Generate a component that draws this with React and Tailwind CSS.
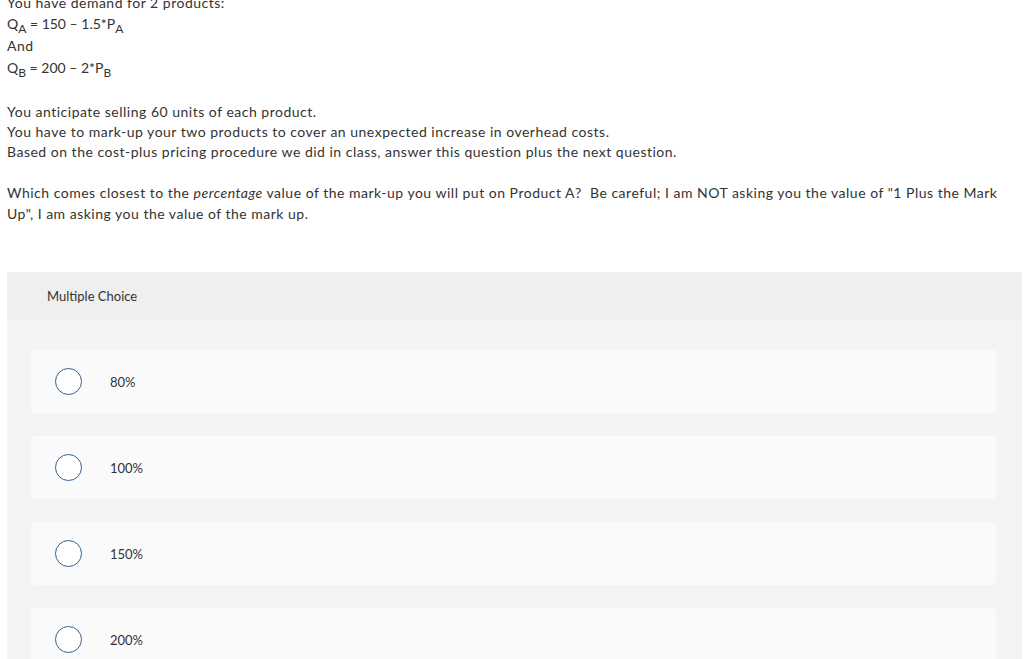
import React from 'react';

const choices = ['80%', '100%', '150%', '200%'];

function Sub({ children }) {
  return <span className="text-[12px] relative top-[4px]">{children}</span>;
}

export default function App() {
  return (
    <div className="bg-white text-[#333] text-[14px] leading-[20px] font-['Lato',sans-serif] overflow-hidden h-[659px]">
      <div className="px-[7px] -mt-[7px] tracking-[0.5px]">
        <p className="h-[21px]">You have demand for 2 products:</p>
        <p className="h-[22px] tracking-normal">Q<Sub>A</Sub> = 150 – 1.5*P<Sub>A</Sub></p>
        <p className="h-[22px]">And</p>
        <p className="h-[22px] tracking-normal">Q<Sub>B</Sub> = 200 – 2*P<Sub>B</Sub></p>
        <div className="h-[22px]" />
        <p>You anticipate selling 60 units of each product.</p>
        <p>You have to mark-up your two products to cover an unexpected increase in overhead costs.</p>
        <p>Based on the cost-plus pricing procedure we did in class, answer this question plus the next question.</p>
        <div className="h-[20px]" />
        <p className="leading-[21px]">
          Which comes closest to the <em>percentage</em> value of the mark-up you will put on Product A?&nbsp; Be careful; I am NOT asking you the value of "1 Plus the Mark
          <br />
          Up", I am asking you the value of the mark up.
        </p>
      </div>

      <div className="mt-[48px] ml-[7px] mr-[2px] rounded-t-[3px] bg-[#f4f4f4]">
        <div className="h-[48px] bg-[#efefef] rounded-t-[3px] flex items-center pl-[40px] text-[13px]">
          Multiple Choice
        </div>
        <div className="pl-[24px] pr-[26px] pt-[30px] flex flex-col gap-[23px]">
          {choices.map((c) => (
            <div key={c} className="h-[63px] bg-[#fafafa] rounded-[3px] flex items-center">
              <span className="ml-[24px] w-[27px] h-[27px] rounded-full border-[1.5px] border-[#2f5f98] bg-white" />
              <span className="ml-[28px] text-[13px]">{c}</span>
            </div>
          ))}
        </div>
      </div>
    </div>
  );
}
